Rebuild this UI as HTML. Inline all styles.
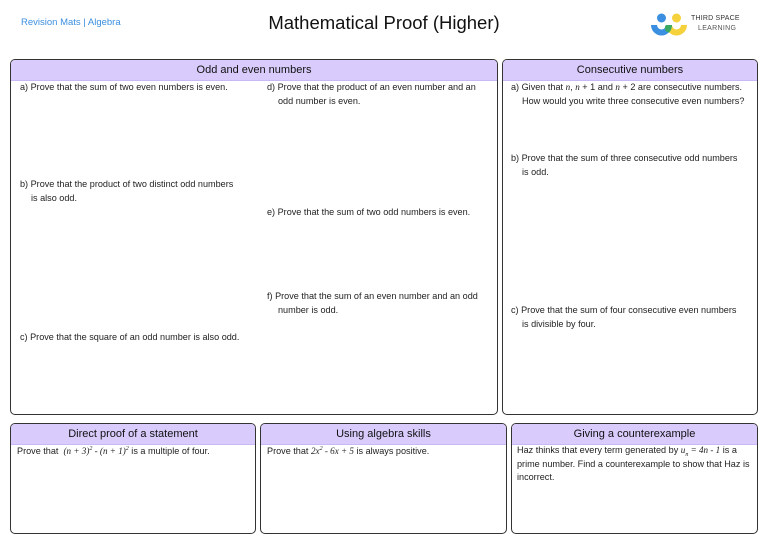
<!DOCTYPE html>
<html><head><style>
body{margin:0;width:768px;height:542px;background:#fff;font-family:"Liberation Sans",sans-serif;position:relative;overflow:hidden;color:#222}
.a{position:absolute;white-space:nowrap}
.box{position:absolute;border:1px solid #333;border-radius:5px;overflow:hidden;box-sizing:border-box}
.hd{background:#d9ccfc;height:20px;line-height:20px;text-align:center;font-size:11px;color:#111;border-bottom:1px solid #c8b8f5}
.t{position:absolute;font-size:9.1px;line-height:14px;color:#222;white-space:nowrap}
.ind{padding-left:11px}
i{font-family:"Liberation Serif",serif}
sup,sub{line-height:0;font-size:6px}
</style></head><body>
<div class="a" style="left:21px;top:17px;font-size:9.5px;color:#3b8fe0">Revision Mats | Algebra</div>
<div class="a" style="left:0;width:768px;top:12px;text-align:center;font-size:18.5px;color:#111">Mathematical Proof (Higher)</div>
<svg class="a" style="left:650px;top:11px" width="42" height="28" viewBox="0 0 42 28">
<path d="M1 14 A10.5 10.5 0 0 0 22 14 L16 14 A4.5 4.5 0 0 1 7 14Z" fill="#3b8fe0"/>
<path d="M16 14 A10.5 10.5 0 0 0 37 14 L31 14 A4.5 4.5 0 0 1 22 14Z" fill="#f5d23c"/>
<path d="M16 14 L22 14 A10.5 10.5 0 0 1 19 21.5 A4.5 4.5 0 0 1 16 14Z" fill="#3aa860"/>
<circle cx="11.5" cy="7" r="4.5" fill="#3b8fe0"/><circle cx="26.5" cy="7" r="4.5" fill="#f5d23c"/>
</svg>
<div class="a" style="left:691px;top:15px;font-size:7px;color:#333;letter-spacing:.2px">THIRD SPACE</div>
<div class="a" style="left:698px;top:25px;font-size:7px;color:#555;letter-spacing:.3px">LEARNING</div>

<div class="box" style="left:10px;top:59px;width:488px;height:356px"><div class="hd">Odd and even numbers</div></div>
<div class="box" style="left:502px;top:59px;width:256px;height:356px"><div class="hd">Consecutive numbers</div></div>
<div class="box" style="left:10px;top:423px;width:246px;height:111px"><div class="hd">Direct proof of a statement</div></div>
<div class="box" style="left:260px;top:423px;width:247px;height:111px"><div class="hd">Using algebra skills</div></div>
<div class="box" style="left:511px;top:423px;width:247px;height:111px"><div class="hd">Giving a counterexample</div></div>

<div class="t" style="left:20px;top:80px">a) Prove that the sum of two even numbers is even.</div>
<div class="t" style="left:267px;top:80px">d) Prove that the product of an even number and an<br><span class="ind">odd number is even.</span></div>
<div class="t" style="left:20px;top:177px">b) Prove that the product of two distinct odd numbers<br><span class="ind">is also odd.</span></div>
<div class="t" style="left:267px;top:205px">e) Prove that the sum of two odd numbers is even.</div>
<div class="t" style="left:267px;top:289px">f) Prove that the sum of an even number and an odd<br><span class="ind">number is odd.</span></div>
<div class="t" style="left:20px;top:330px">c) Prove that the square of an odd number is also odd.</div>
<div class="t" style="left:511px;top:80px">a) Given that <i>n</i>, <i>n</i> + 1 and <i>n</i> + 2 are consecutive numbers.<br><span class="ind">How would you write three consecutive even numbers?</span></div>
<div class="t" style="left:511px;top:151px">b) Prove that the sum of three consecutive odd numbers<br><span class="ind">is odd.</span></div>
<div class="t" style="left:511px;top:303px">c) Prove that the sum of four consecutive even numbers<br><span class="ind">is divisible by four.</span></div>
<div class="t" style="left:17px;top:444px">Prove that &nbsp;<i>(n + 3)<sup>2</sup> - (n + 1)<sup>2</sup></i> is a multiple of four.</div>
<div class="t" style="left:267px;top:444px">Prove that <i>2x<sup>2</sup> - 6x + 5</i> is always positive.</div>
<div class="t" style="left:517px;top:444px;line-height:13.5px">Haz thinks that every term generated by <i>u<sub>n</sub> = 4n - 1</i> is a<br>prime number. Find a counterexample to show that Haz is<br>incorrect.</div>
</body></html>
